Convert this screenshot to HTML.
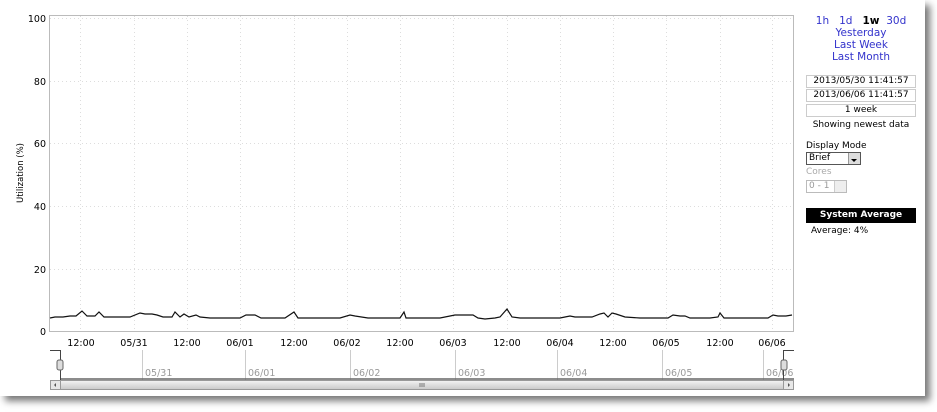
<!DOCTYPE html>
<html><head><style>
body{margin:0;width:937px;height:412px;background:#fff;overflow:hidden;font-family:"DejaVu Sans","Liberation Sans",sans-serif;position:relative}
.panel{position:absolute;left:0;top:0;width:925px;height:396px;background:#fff;box-shadow:5px 5px 7px #777}
.r{position:absolute;font-size:10px;color:#000}
.lnk{color:#3333cc}
.box{position:absolute;left:806px;width:108px;height:11px;border:1px solid #ccc;font-size:9px;text-align:center;line-height:11px}
</style></head><body>
<div class="panel"></div>
<svg style="position:absolute;left:0;top:0" width="937" height="412" font-family="DejaVu Sans,Liberation Sans,sans-serif">
<g stroke="#ddd" stroke-dasharray="1,3" stroke-width="1">
<line x1="50" x2="793" y1="18.5" y2="18.5"/><line x1="50" x2="793" y1="81.5" y2="81.5"/><line x1="50" x2="793" y1="143.5" y2="143.5"/><line x1="50" x2="793" y1="206.5" y2="206.5"/><line x1="50" x2="793" y1="269.5" y2="269.5"/>
<line x1="80.5" x2="80.5" y1="16" y2="331"/><line x1="134.5" x2="134.5" y1="16" y2="331"/><line x1="187.5" x2="187.5" y1="16" y2="331"/><line x1="240.5" x2="240.5" y1="16" y2="331"/><line x1="294.5" x2="294.5" y1="16" y2="331"/><line x1="347.5" x2="347.5" y1="16" y2="331"/><line x1="400.5" x2="400.5" y1="16" y2="331"/><line x1="453.5" x2="453.5" y1="16" y2="331"/><line x1="507.5" x2="507.5" y1="16" y2="331"/><line x1="560.5" x2="560.5" y1="16" y2="331"/><line x1="613.5" x2="613.5" y1="16" y2="331"/><line x1="666.5" x2="666.5" y1="16" y2="331"/><line x1="720.5" x2="720.5" y1="16" y2="331"/><line x1="772.5" x2="772.5" y1="16" y2="331"/>
</g>
<rect x="49.5" y="15.5" width="744" height="316" fill="none" stroke="#bbb"/>
<g font-size="9.5" fill="#000" text-anchor="end">
<text x="46" y="22">100</text><text x="46" y="85">80</text><text x="46" y="147">60</text><text x="46" y="210">40</text><text x="46" y="273">20</text><text x="46" y="335">0</text>
</g>
<text x="23" y="173" font-size="8.5" text-anchor="middle" transform="rotate(-90 23 173)">Utilization (%)</text>
<g font-size="9.5" text-anchor="middle">
<text x="81" y="346">12:00</text><text x="134" y="346">05/31</text><text x="187" y="346">12:00</text><text x="240" y="346">06/01</text><text x="294" y="346">12:00</text><text x="347" y="346">06/02</text><text x="400" y="346">12:00</text><text x="453" y="346">06/03</text><text x="507" y="346">12:00</text><text x="560" y="346">06/04</text><text x="613" y="346">12:00</text><text x="666" y="346">06/05</text><text x="720" y="346">12:00</text><text x="772" y="346">06/06</text>
</g>
<polyline fill="none" stroke="#111" stroke-width="1.2" points="50,318 55,317 63,317 70,316 76,316 82,311 87,316 95,316 99,312 104,317 130,317 140,313 145,314 152,314 157,315 163,317 172,317 175,312 180,317 184,314 189,317 196,315 200,317 210,318 240,318 246,315 255,315 261,318 285,318 294,312 298,318 340,318 350,315 355,316 368,318 400,318 402,315 404,312 406,318 430,318 440,318 455,315 473,315 478,318 485,319 495,318 500,317 507,309 512,317 520,318 560,318 565,317 570,316 575,317 592,317 600,314 604,313 608,317 612,313 616,314 625,317 640,318 668,318 673,315 680,316 685,316 690,318 710,318 718,317 720,313 724,318 760,318 768,318 773,315 778,316 786,316 792,315"/>
<g stroke="#ccc"><line x1="142.5" x2="142.5" y1="350" y2="380"/><line x1="245.5" x2="245.5" y1="350" y2="380"/><line x1="350.5" x2="350.5" y1="350" y2="380"/><line x1="455.5" x2="455.5" y1="350" y2="380"/><line x1="557.5" x2="557.5" y1="350" y2="380"/><line x1="662.5" x2="662.5" y1="350" y2="380"/><line x1="763.5" x2="763.5" y1="350" y2="380"/></g>
<g font-size="9.5" fill="#9a9a9a"><text x="145" y="376">05/31</text><text x="248" y="376">06/01</text><text x="353" y="376">06/02</text><text x="458" y="376">06/03</text><text x="560" y="376">06/04</text><text x="665" y="376">06/05</text><text x="766" y="376">06/06</text></g>
<line x1="60" x2="794" y1="379" y2="379" stroke="#666" stroke-width="1.5"/>
<path d="M50 350.5H60.5V380M794 350.5H783.5V380" fill="none" stroke="#444"/>
<rect x="57" y="360" width="6" height="10" rx="2" fill="#ddd" stroke="#666"/>
<rect x="781" y="360" width="6" height="10" rx="2" fill="#ddd" stroke="#666"/>
<defs><linearGradient id="g" x1="0" y1="0" x2="0" y2="1"><stop offset="0" stop-color="#f4f4f4"/><stop offset="1" stop-color="#c8c8c8"/></linearGradient></defs>
<rect x="50.5" y="380.5" width="743" height="9" fill="url(#g)" stroke="#999"/>
<rect x="50.5" y="380.5" width="10" height="9" fill="#e8e8e8" stroke="#999"/>
<rect x="783.5" y="380.5" width="10" height="9" fill="#e8e8e8" stroke="#999"/>
<path d="M54 385l2-2v4zM790 385l-2-2v4z" fill="#555"/>
<path d="M420 383v4M422 383v4M424 383v4" stroke="#777"/>
</svg>
<div class="r" style="left:806px;top:15px;width:110px;text-align:center;font-size:10.5px;line-height:12px"><span class="lnk">1h</span>&nbsp;&nbsp;&nbsp;<span class="lnk">1d</span>&nbsp;&nbsp;&nbsp;<b>1w</b>&nbsp;&nbsp;<span class="lnk">30d</span><br><span class="lnk">Yesterday</span><br><span class="lnk">Last Week</span><br><span class="lnk">Last Month</span></div>
<div class="box" style="top:75px">2013/05/30 11:41:57</div>
<div class="box" style="top:89px">2013/06/06 11:41:57</div>
<div class="box" style="top:104px">1 week</div>
<div class="r" style="left:806px;top:120px;width:110px;text-align:center;font-size:9px">Showing newest data</div>
<div class="r" style="left:806px;top:141px;font-size:9px">Display Mode</div>
<div style="position:absolute;left:806px;top:152px;width:51px;height:11px;border:1px solid #555;font-size:9px;line-height:11px;padding-left:2px;box-sizing:content-box">Brief<span style="position:absolute;right:0;top:0;width:11px;height:11px;background:#ddd;border-left:1px solid #999"><span style="position:absolute;left:2px;top:6px;border-left:3.5px solid transparent;border-right:3.5px solid transparent;border-top:3px solid #000"></span></span></div>
<div class="r" style="left:806px;top:167px;font-size:9px;color:#aaa">Cores</div>
<div style="position:absolute;left:806px;top:180px;width:37px;height:11px;border:1px solid #bbb;font-size:9px;line-height:11px;color:#999;padding-left:2px">0 - 1<span style="position:absolute;right:0;top:0;width:11px;height:11px;background:#eee;border-left:1px solid #ccc"></span></div>
<div style="position:absolute;left:806px;top:208px;width:110px;height:15px;background:#000;color:#fff;font-size:9px;font-weight:bold;text-align:center;line-height:15px">System Average</div>
<div class="r" style="left:811px;top:226px;font-size:9px">Average: 4%</div>
</body></html>
